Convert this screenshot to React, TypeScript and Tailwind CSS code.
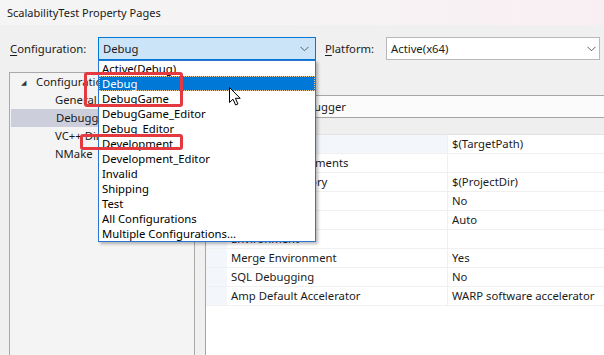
import React from "react";

const items = [
  "Active(Debug)",
  "Debug",
  "DebugGame",
  "DebugGame_Editor",
  "Debug_Editor",
  "Development",
  "Development_Editor",
  "Invalid",
  "Shipping",
  "Test",
  "All Configurations",
  "Multiple Configurations...",
];

const rows: [string, string][] = [
  ["Command", "$(TargetPath)"],
  ["Command Arguments", ""],
  ["Working Directory", "$(ProjectDir)"],
  ["Attach", "No"],
  ["Debugger Type", "Auto"],
  ["Environment", ""],
  ["Merge Environment", "Yes"],
  ["SQL Debugging", "No"],
  ["Amp Default Accelerator", "WARP software accelerator"],
];

function Chevron() {
  return (
    <svg width="9" height="6" viewBox="0 0 9 6" className="shrink-0">
      <polyline points="0.5,0.8 4.5,4.8 8.5,0.8" fill="none" stroke="#606060" strokeWidth="1" />
    </svg>
  );
}

export default function App() {
  return (
    <div className="relative w-[604px] h-[355px] overflow-hidden bg-[#f0f0f0] text-[#1b1b1b] font-['Noto_Sans',sans-serif] text-[11.3px] leading-none">
      {/* Title bar */}
      <div className="h-[25px] flex items-center pl-[7px] bg-linear-to-r from-[#f5f5f5] via-[#f6f3f4] to-[#f9eff2] text-[11px] text-[#1a1a1a]">
        ScalabilityTest Property Pages
      </div>

      {/* Configuration row */}
      <div className="flex items-center mt-[12px] h-[23px] pl-[10px]">
        <div className="w-[88px]">
          <span className="underline underline-offset-2">C</span>onfiguration:
        </div>
        <div className="w-[218px] h-[23px] flex items-center justify-between pl-[4px] pr-[6px] bg-[#cce4f7] border border-[#0078d7]">
          <span>Debug</span>
          <Chevron />
        </div>
        <div className="w-[61px] pl-[9px] box-content">
          <span className="underline underline-offset-2">P</span>latform:
        </div>
        <div className="w-[214px] h-[23px] flex items-center justify-between pl-[4px] pr-[3px] bg-white border border-[#b9b9b9]">
          <span>Active(x64)</span>
          <Chevron />
        </div>
      </div>

      {/* Main area */}
      <div className="flex mt-[12px] h-[300px]">
        {/* Tree */}
        <div className="ml-[9px] w-[186px] h-full bg-[#f4f4f4] border border-[#a9a9a9]">
          <div className="h-[18px] flex items-center pl-[11px]">
            <span className="text-[7px] text-[#333] w-[15px]">◢</span>
            <span>Configuration Properties</span>
          </div>
          <div className="h-[18px] flex items-center pl-[45px]">General</div>
          <div className="h-[18px] flex items-center pl-[45px] mx-[1px] bg-[#cccedb]">Debugging</div>
          <div className="h-[18px] flex items-center pl-[45px]">VC++ Directories</div>
          <div className="h-[18px] flex items-center pl-[45px]">NMake</div>
        </div>

        {/* Right panel */}
        <div className="ml-[10px] flex-1 flex flex-col pt-[23px]">
          <div className="h-[23px] flex items-center pl-[5px] bg-[#fbfbfb] border-y border-l border-[#a6a6a6]">
            Local Windows Debugger
          </div>
          <div className="h-[17px] bg-[#efefef] border-b border-[#e2e2e2]"></div>
          <div className="flex-1 bg-white border-l border-[#a6a6a6]">
            {rows.map(([k, v], i) => (
              <div key={k} className="grid grid-cols-[21px_221px_1fr] h-[19px] border-b border-[#f0f0f0]">
                <div className="bg-[#f3f6fb]"></div>
                <div className={`flex items-center pl-[4px] border-r border-[#f0f0f0] ${i === 0 ? "bg-[#f3f6fb]" : ""}`}>{k}</div>
                <div className="flex items-center pl-[4px]">{v}</div>
              </div>
            ))}
          </div>
        </div>
      </div>

      {/* Dropdown list */}
      <div className="absolute left-[98px] top-[60px] w-[218px] h-[182px] bg-white border border-[#2a76d2] shadow-[2px_2px_3px_rgba(0,0,0,0.28)] text-black">
        {items.map((it, i) => (
          <div
            key={it}
            className={
              i === 1
                ? "h-[15px] flex items-center pl-[2px] bg-[#0078d7] text-white border border-dotted border-[#e9c58e]"
                : "h-[15px] flex items-center pl-[3px]"
            }
          >
            {it}
          </div>
        ))}
      </div>

      {/* Red highlight boxes */}
      <div className="absolute left-[84px] top-[72px] w-[99px] h-[35px] border-[3px] border-[#e4393f] rounded-[3px]"></div>
      <div className="absolute left-[80px] top-[134px] w-[103px] h-[16px] border-[3px] border-[#e4393f] rounded-[3px]"></div>

      {/* Mouse cursor */}
      <svg className="absolute left-[229px] top-[87px]" width="13" height="19" viewBox="0 0 13 19">
        <path d="M0.5 0.5 L0.5 15.5 L4 12.2 L6.6 18 L8.9 17 L6.4 11.3 L11.2 11.3 Z" fill="white" stroke="black" strokeWidth="1" strokeLinejoin="miter" />
      </svg>
    </div>
  );
}
